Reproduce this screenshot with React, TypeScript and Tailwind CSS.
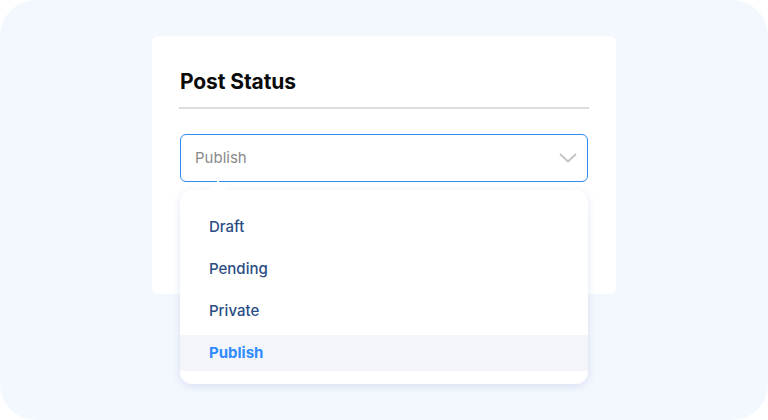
import React from 'react';

const options = ['Draft', 'Pending', 'Private', 'Publish'];

const App: React.FC = () => {
  const [selected] = React.useState('Publish');

  return (
    <div className="w-[768px] h-[420px] bg-white" style={{ fontFamily: 'Inter, "Noto Sans", sans-serif' }}>
      <div className="w-full h-full bg-[#f3f7fe] rounded-[36px] flex justify-center pt-9">
        <div className="w-[464px] h-[258px] bg-white rounded-md px-7 pt-[32px] relative">
          <h1 className="text-[21px] leading-[28px] font-bold text-[#0b0b0b] tracking-[-0.1px]">Post Status</h1>
          <div className="h-[2px] bg-[#dcdcdc] mt-[11px] mx-[-1px]" />

          {/* Select */}
          <div className="mt-[25px] h-[48px] border-[1.5px] border-[#3089f5] rounded-[6px] flex items-center justify-between pl-[14px] pr-[10px]">
            <span className="text-[15px] text-[#8a8a8a] mt-[1px]">{selected}</span>
            <svg width="18" height="10" viewBox="0 0 18 10" fill="none">
              <path d="M1.5 1.5L9 8.5L16.5 1.5" stroke="#c4c4c4" strokeWidth="1.8" strokeLinecap="round" strokeLinejoin="round" />
            </svg>
          </div>

          {/* Dropdown */}
          <div className="absolute left-7 right-7 top-[154px] z-10">
            <svg className="absolute left-[28px] top-[-12px]" width="20" height="13" viewBox="0 0 20 13">
              <path d="M0 13L10 2.5L20 13Z" fill="#ffffff" />
            </svg>
            <div className="bg-white rounded-[12px] shadow-[0_2px_8px_rgba(90,120,180,0.18)] pt-[19px] pb-[13px] flex flex-col gap-[6px]">
              {options.map((opt) => (
                <div
                  key={opt}
                  className={`h-9 flex items-center pl-[29px] text-[15px] ${
                    opt === selected ? 'bg-[#f3f5fa] text-[#2f8bff] font-bold' : 'text-[#2a4d85] font-medium'
                  }`}
                >
                  {opt}
                </div>
              ))}
            </div>
          </div>
        </div>
      </div>
    </div>
  );
};

export default App;
